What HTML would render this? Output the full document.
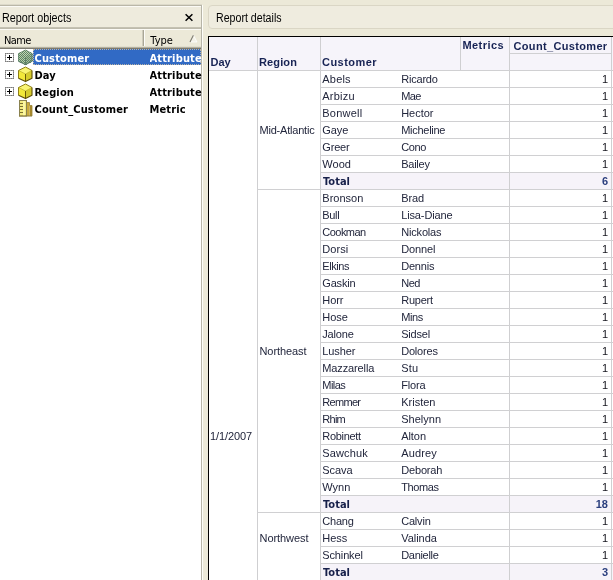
<!DOCTYPE html>
<html><head><meta charset="utf-8"><title>Report</title>
<style>
html,body{margin:0;padding:0;}
body{will-change:transform;width:613px;height:580px;overflow:hidden;background:#ece9d8;position:relative;font-family:"DejaVu Sans","Liberation Sans",sans-serif;font-size:11px;color:#000;}
.abs{position:absolute;}
.ui{font-family:"DejaVu Sans Condensed","DejaVu Sans","Liberation Sans",sans-serif;font-size:11px;letter-spacing:-0.2px;color:#000;white-space:nowrap;}
.ttl{font-family:"Liberation Sans",sans-serif;font-size:12.5px;line-height:15px;color:#000;white-space:nowrap;transform-origin:0 0;}
.tree{font-family:"DejaVu Sans Condensed","DejaVu Sans","Liberation Sans",sans-serif;font-weight:bold;font-size:11px;white-space:nowrap;letter-spacing:0.15px;}
.grid{position:absolute;left:208px;top:36px;width:405px;height:544px;background:#fff;border-left:1px solid #000;border-top:1px solid #000;box-sizing:border-box;overflow:hidden;}
.c{position:absolute;box-sizing:border-box;font-family:"Liberation Sans",sans-serif;font-size:11px;color:#2b2f4a;white-space:nowrap;}
.h{background:#f6f4fa;font-weight:bold;color:#1c2858;font-size:11px;}
.bl{border-left:1px solid #cfcfd1;}
.bb{border-bottom:1px solid #d0d0d2;}
.t{position:absolute;white-space:nowrap;line-height:13px;font-family:"Liberation Sans",sans-serif;font-size:11px;}
.d{color:#22263c;}
.n{color:#14141c;}
.tn{font-weight:bold;color:#2b3f7e;}
.hb{font-weight:bold;color:#172354;}
.tb{font-family:"DejaVu Sans Condensed","DejaVu Sans","Liberation Sans",sans-serif;font-weight:bold;color:#17204a;}
.tot{background:#f6f3f9;font-weight:bold;color:#1c2858;}
</style></head><body>


<div class="abs" style="left:0;top:4px;width:202px;height:1px;background:#dcd9ca;"></div>
<div class="abs" style="left:0;top:5px;width:202px;height:1px;background:#bab7a8;"></div>
<div class="abs" style="left:0;top:6px;width:201px;height:1px;background:#fbfaf5;"></div>
<div class="abs" style="left:0;top:7px;width:201px;height:20px;background:#eeebdd;"></div>
<div class="abs ttl" style="left:2px;top:11px;transform:scaleX(0.86);">Report objects</div>
<svg class="abs" style="left:184px;top:13px" width="10" height="9" viewBox="0 0 10 9"><path d="M1.6 1.2 L8.4 7.8 M8.4 1.2 L1.6 7.8" stroke="#000" stroke-width="1.5" fill="none"/></svg>
<div class="abs" style="left:0;top:27px;width:202px;height:1px;background:#c4c1b2;"></div>
<div class="abs" style="left:0;top:28px;width:202px;height:1px;background:#bdbaab;"></div>
<div class="abs" style="left:0;top:29px;width:201px;height:1px;background:#fbfaf5;"></div>
<div class="abs" style="left:0;top:30px;width:201px;height:16px;background:#ece9d8;"></div>
<div class="abs ui" style="left:4px;top:34px;line-height:14px;letter-spacing:-0.6px;">Name</div>
<div class="abs" style="left:142px;top:30px;width:1px;height:17px;background:#cfccbd;"></div>
<div class="abs" style="left:143px;top:30px;width:1px;height:17px;background:#a9a696;"></div>
<div class="abs" style="left:144px;top:30px;width:1px;height:17px;background:#fdfdf9;"></div>
<div class="abs ui" style="left:150.3px;top:34px;line-height:14px;letter-spacing:0px;">Type</div>
<svg class="abs" style="left:189px;top:34px" width="9" height="9" viewBox="0 0 9 9"><path d="M4.3 1 L8 8 L1.5 8 Z" fill="#f4f2e8" stroke="#fff" stroke-width="0.8"/><path d="M1 8 L4.4 1.2" stroke="#7d7a6d" stroke-width="1.1" fill="none"/></svg>
<div class="abs" style="left:0;top:46px;width:202px;height:1px;background:#e2dfce;"></div>
<div class="abs" style="left:0;top:47px;width:202px;height:1px;background:#b3b0a0;"></div>
<div class="abs" style="left:0;top:48px;width:202px;height:1px;background:#7d7b70;"></div>
<div class="abs" style="left:0;top:49px;width:201px;height:531px;background:#fff;"></div>
<div class="abs" style="left:201px;top:5px;width:1px;height:575px;background:#b7b5a8;"></div>
<div class="abs" style="left:202px;top:5px;width:1px;height:575px;background:#fdfdf8;"></div>
<div class="abs" style="left:33px;top:49px;width:168px;height:16px;background:#316ac5;outline:1px dotted #b9b3a6;outline-offset:-1px;"></div>

<svg class="abs" style="left:5px;top:53px" width="9" height="9" viewBox="0 0 9 9"><rect x="0.5" y="0.5" width="8" height="8" fill="#fff" stroke="#a2a2a2"/><path d="M0 0.5H1M8 0.5H9M0 8.5H1M8 8.5H9M2 0.5H3M4 0.5H5M6 0.5H7M2 8.5H3M4 8.5H5M6 8.5H7M0.5 2V3M0.5 4V5M0.5 6V7M8.5 2V3M8.5 4V5M8.5 6V7" stroke="#7c7c7c" stroke-width="1"/><path d="M2 4.5H7M4.5 2V7" stroke="#000" stroke-width="1"/></svg>
<svg class="abs" style="left:17px;top:49px" width="16" height="17" viewBox="0 0 16 17"><defs><pattern id="dz" width="2" height="2" patternUnits="userSpaceOnUse"><rect x="0" y="0" width="1" height="1" fill="#5d8069"/><rect x="1" y="1" width="1" height="1" fill="#5d8069"/></pattern></defs><path d="M1.5 4.5 L8.5 1 L15 4.5 L8.5 8 Z" fill="#c3dab0"/><path d="M1.5 4.5 L8.5 8 L8.5 15.6 L1.5 12.3 Z" fill="#b7d2a6"/><path d="M8.5 8 L15 4.5 L15 12.3 L8.5 15.6 Z" fill="#a3c196"/><path d="M1.5 4.5 L8.5 8 L15 4.5" stroke="#9fbd93" stroke-width="0.8" fill="none"/><path d="M8.5 8 V15.3" stroke="#5f7f68" stroke-width="1" fill="none"/><path d="M1.5 12.3 L1.5 4.5 L8.5 1 L15 4.5" stroke="#7f9f80" stroke-width="1" fill="none" stroke-linejoin="round"/><path d="M15 4.5 L15 12.3 L8.5 15.6 L1.5 12.3" stroke="#587a62" stroke-width="1.1" fill="none" stroke-linejoin="round"/><path d="M1 4.3 L8.5 0.6 L15.5 4.3 L15.5 12.5 L8.5 16 L1 12.5 Z" fill="url(#dz)" shape-rendering="crispEdges"/></svg>
<div class="abs tree" style="left:34.5px;top:52px;line-height:13px;color:#fff;">Customer</div>
<div class="abs tree" style="left:149.5px;top:52px;line-height:13px;color:#fff;width:52px;overflow:hidden;">Attribute</div>
<svg class="abs" style="left:5px;top:70px" width="9" height="9" viewBox="0 0 9 9"><rect x="0.5" y="0.5" width="8" height="8" fill="#fff" stroke="#a2a2a2"/><path d="M0 0.5H1M8 0.5H9M0 8.5H1M8 8.5H9M2 0.5H3M4 0.5H5M6 0.5H7M2 8.5H3M4 8.5H5M6 8.5H7M0.5 2V3M0.5 4V5M0.5 6V7M8.5 2V3M8.5 4V5M8.5 6V7" stroke="#7c7c7c" stroke-width="1"/><path d="M2 4.5H7M4.5 2V7" stroke="#000" stroke-width="1"/></svg>
<svg class="abs" style="left:17px;top:66px" width="16" height="17" viewBox="0 0 16 17"><path d="M1.5 4.5 L8.5 1 L15 4.5 L8.5 8 Z" fill="#f9f472"/><path d="M1.5 4.5 L8.5 8 L8.5 15.6 L1.5 12.3 Z" fill="#f2e83a"/><path d="M8.5 8 L15 4.5 L15 12.3 L8.5 15.6 Z" fill="#d6cc2c"/><path d="M1.5 4.5 L8.5 8 L15 4.5" stroke="#c2b626" stroke-width="0.8" fill="none"/><path d="M8.5 8 V15.3" stroke="#6a5a08" stroke-width="1" fill="none"/><path d="M1.5 12.3 L1.5 4.5 L8.5 1 L15 4.5" stroke="#8f8018" stroke-width="1" fill="none" stroke-linejoin="round"/><path d="M15 4.5 L15 12.3 L8.5 15.6 L1.5 12.3" stroke="#5e4f06" stroke-width="1.1" fill="none" stroke-linejoin="round"/></svg>
<div class="abs tree" style="left:34.5px;top:69px;line-height:13px;color:#000;">Day</div>
<div class="abs tree" style="left:149.5px;top:69px;line-height:13px;color:#000;width:52px;overflow:hidden;">Attribute</div>
<svg class="abs" style="left:5px;top:87px" width="9" height="9" viewBox="0 0 9 9"><rect x="0.5" y="0.5" width="8" height="8" fill="#fff" stroke="#a2a2a2"/><path d="M0 0.5H1M8 0.5H9M0 8.5H1M8 8.5H9M2 0.5H3M4 0.5H5M6 0.5H7M2 8.5H3M4 8.5H5M6 8.5H7M0.5 2V3M0.5 4V5M0.5 6V7M8.5 2V3M8.5 4V5M8.5 6V7" stroke="#7c7c7c" stroke-width="1"/><path d="M2 4.5H7M4.5 2V7" stroke="#000" stroke-width="1"/></svg>
<svg class="abs" style="left:17px;top:83px" width="16" height="17" viewBox="0 0 16 17"><path d="M1.5 4.5 L8.5 1 L15 4.5 L8.5 8 Z" fill="#f9f472"/><path d="M1.5 4.5 L8.5 8 L8.5 15.6 L1.5 12.3 Z" fill="#f2e83a"/><path d="M8.5 8 L15 4.5 L15 12.3 L8.5 15.6 Z" fill="#d6cc2c"/><path d="M1.5 4.5 L8.5 8 L15 4.5" stroke="#c2b626" stroke-width="0.8" fill="none"/><path d="M8.5 8 V15.3" stroke="#6a5a08" stroke-width="1" fill="none"/><path d="M1.5 12.3 L1.5 4.5 L8.5 1 L15 4.5" stroke="#8f8018" stroke-width="1" fill="none" stroke-linejoin="round"/><path d="M15 4.5 L15 12.3 L8.5 15.6 L1.5 12.3" stroke="#5e4f06" stroke-width="1.1" fill="none" stroke-linejoin="round"/></svg>
<div class="abs tree" style="left:34.5px;top:86px;line-height:13px;color:#000;">Region</div>
<div class="abs tree" style="left:149.5px;top:86px;line-height:13px;color:#000;width:52px;overflow:hidden;">Attribute</div>
<svg class="abs" style="left:19px;top:100px" width="14" height="17" viewBox="0 0 14 17"><rect x="10.5" y="5.5" width="2.5" height="10.5" fill="#a88a2c"/><rect x="8" y="2.5" width="2.5" height="13.5" fill="#c9aa3c"/><path d="M8 2.5 H10.5 V5.5 H13 V16" stroke="#9a8434" stroke-width="0.8" fill="none"/><rect x="0.5" y="0.5" width="7" height="15.5" fill="#f4ec7e" stroke="#8a8250" stroke-width="1"/><rect x="4" y="1" width="2" height="14.5" fill="#faf6a8"/><path d="M1 3.5H4M1 6.5H4M1 9.5H4M1 12.5H4" stroke="#7a7030" stroke-width="1"/><path d="M0 16 H13" stroke="#8a7a38" stroke-width="1"/></svg>
<div class="abs tree" style="left:34.5px;top:103px;line-height:13px;color:#000;">Count_Customer</div>
<div class="abs tree" style="left:149.5px;top:103px;line-height:13px;color:#000;width:52px;overflow:hidden;">Metric</div>

<div class="abs" style="left:203px;top:0;width:5px;height:580px;background:#ece9d8;"></div>
<div class="abs" style="left:208px;top:5px;width:410px;height:24px;border:1px solid #dad6c5;border-radius:4px;box-sizing:border-box;background:#efecdf;"></div>
<div class="abs ttl" style="left:216px;top:11px;transform:scaleX(0.85);">Report details</div>
<div class="grid">

<div class="c h bb" style="left:0px;top:0px;width:48px;height:34px;"></div>
<div class="c h bb bl" style="left:48px;top:0px;width:63px;height:34px;"></div>
<div class="c h bb bl" style="left:111px;top:0px;width:140px;height:34px;"></div>
<div class="c h bb bl" style="left:251px;top:0px;width:49px;height:34px;"></div>
<div class="c h bb bl" style="left:300px;top:0px;width:102px;height:17px;"></div>
<div class="c h bb bl" style="left:300px;top:17px;width:102px;height:17px;"></div>
<div class="c h bb bl" style="left:402px;top:0px;width:2px;height:34px;"></div>
<div class="c bb" style="left:0px;top:34px;width:48px;height:510px;"></div>
<div class="c bb bl" style="left:48px;top:34px;width:63px;height:119px;"></div>
<div class="c bb bl" style="left:111px;top:34px;width:189px;height:17px;"></div>
<div class="c bb bl" style="left:300px;top:34px;width:102px;height:17px;"></div>
<div class="c bb bl" style="left:402px;top:34px;width:2px;height:17px;"></div>
<div class="c bb bl" style="left:111px;top:51px;width:189px;height:17px;"></div>
<div class="c bb bl" style="left:300px;top:51px;width:102px;height:17px;"></div>
<div class="c bb bl" style="left:402px;top:51px;width:2px;height:17px;"></div>
<div class="c bb bl" style="left:111px;top:68px;width:189px;height:17px;"></div>
<div class="c bb bl" style="left:300px;top:68px;width:102px;height:17px;"></div>
<div class="c bb bl" style="left:402px;top:68px;width:2px;height:17px;"></div>
<div class="c bb bl" style="left:111px;top:85px;width:189px;height:17px;"></div>
<div class="c bb bl" style="left:300px;top:85px;width:102px;height:17px;"></div>
<div class="c bb bl" style="left:402px;top:85px;width:2px;height:17px;"></div>
<div class="c bb bl" style="left:111px;top:102px;width:189px;height:17px;"></div>
<div class="c bb bl" style="left:300px;top:102px;width:102px;height:17px;"></div>
<div class="c bb bl" style="left:402px;top:102px;width:2px;height:17px;"></div>
<div class="c bb bl" style="left:111px;top:119px;width:189px;height:17px;"></div>
<div class="c bb bl" style="left:300px;top:119px;width:102px;height:17px;"></div>
<div class="c bb bl" style="left:402px;top:119px;width:2px;height:17px;"></div>
<div class="c bb bl tot" style="left:111px;top:136px;width:189px;height:17px;"></div>
<div class="c bb bl tot" style="left:300px;top:136px;width:102px;height:17px;"></div>
<div class="c bb bl tot" style="left:402px;top:136px;width:2px;height:17px;"></div>
<div class="c bb bl" style="left:48px;top:153px;width:63px;height:323px;"></div>
<div class="c bb bl" style="left:111px;top:153px;width:189px;height:17px;"></div>
<div class="c bb bl" style="left:300px;top:153px;width:102px;height:17px;"></div>
<div class="c bb bl" style="left:402px;top:153px;width:2px;height:17px;"></div>
<div class="c bb bl" style="left:111px;top:170px;width:189px;height:17px;"></div>
<div class="c bb bl" style="left:300px;top:170px;width:102px;height:17px;"></div>
<div class="c bb bl" style="left:402px;top:170px;width:2px;height:17px;"></div>
<div class="c bb bl" style="left:111px;top:187px;width:189px;height:17px;"></div>
<div class="c bb bl" style="left:300px;top:187px;width:102px;height:17px;"></div>
<div class="c bb bl" style="left:402px;top:187px;width:2px;height:17px;"></div>
<div class="c bb bl" style="left:111px;top:204px;width:189px;height:17px;"></div>
<div class="c bb bl" style="left:300px;top:204px;width:102px;height:17px;"></div>
<div class="c bb bl" style="left:402px;top:204px;width:2px;height:17px;"></div>
<div class="c bb bl" style="left:111px;top:221px;width:189px;height:17px;"></div>
<div class="c bb bl" style="left:300px;top:221px;width:102px;height:17px;"></div>
<div class="c bb bl" style="left:402px;top:221px;width:2px;height:17px;"></div>
<div class="c bb bl" style="left:111px;top:238px;width:189px;height:17px;"></div>
<div class="c bb bl" style="left:300px;top:238px;width:102px;height:17px;"></div>
<div class="c bb bl" style="left:402px;top:238px;width:2px;height:17px;"></div>
<div class="c bb bl" style="left:111px;top:255px;width:189px;height:17px;"></div>
<div class="c bb bl" style="left:300px;top:255px;width:102px;height:17px;"></div>
<div class="c bb bl" style="left:402px;top:255px;width:2px;height:17px;"></div>
<div class="c bb bl" style="left:111px;top:272px;width:189px;height:17px;"></div>
<div class="c bb bl" style="left:300px;top:272px;width:102px;height:17px;"></div>
<div class="c bb bl" style="left:402px;top:272px;width:2px;height:17px;"></div>
<div class="c bb bl" style="left:111px;top:289px;width:189px;height:17px;"></div>
<div class="c bb bl" style="left:300px;top:289px;width:102px;height:17px;"></div>
<div class="c bb bl" style="left:402px;top:289px;width:2px;height:17px;"></div>
<div class="c bb bl" style="left:111px;top:306px;width:189px;height:17px;"></div>
<div class="c bb bl" style="left:300px;top:306px;width:102px;height:17px;"></div>
<div class="c bb bl" style="left:402px;top:306px;width:2px;height:17px;"></div>
<div class="c bb bl" style="left:111px;top:323px;width:189px;height:17px;"></div>
<div class="c bb bl" style="left:300px;top:323px;width:102px;height:17px;"></div>
<div class="c bb bl" style="left:402px;top:323px;width:2px;height:17px;"></div>
<div class="c bb bl" style="left:111px;top:340px;width:189px;height:17px;"></div>
<div class="c bb bl" style="left:300px;top:340px;width:102px;height:17px;"></div>
<div class="c bb bl" style="left:402px;top:340px;width:2px;height:17px;"></div>
<div class="c bb bl" style="left:111px;top:357px;width:189px;height:17px;"></div>
<div class="c bb bl" style="left:300px;top:357px;width:102px;height:17px;"></div>
<div class="c bb bl" style="left:402px;top:357px;width:2px;height:17px;"></div>
<div class="c bb bl" style="left:111px;top:374px;width:189px;height:17px;"></div>
<div class="c bb bl" style="left:300px;top:374px;width:102px;height:17px;"></div>
<div class="c bb bl" style="left:402px;top:374px;width:2px;height:17px;"></div>
<div class="c bb bl" style="left:111px;top:391px;width:189px;height:17px;"></div>
<div class="c bb bl" style="left:300px;top:391px;width:102px;height:17px;"></div>
<div class="c bb bl" style="left:402px;top:391px;width:2px;height:17px;"></div>
<div class="c bb bl" style="left:111px;top:408px;width:189px;height:17px;"></div>
<div class="c bb bl" style="left:300px;top:408px;width:102px;height:17px;"></div>
<div class="c bb bl" style="left:402px;top:408px;width:2px;height:17px;"></div>
<div class="c bb bl" style="left:111px;top:425px;width:189px;height:17px;"></div>
<div class="c bb bl" style="left:300px;top:425px;width:102px;height:17px;"></div>
<div class="c bb bl" style="left:402px;top:425px;width:2px;height:17px;"></div>
<div class="c bb bl" style="left:111px;top:442px;width:189px;height:17px;"></div>
<div class="c bb bl" style="left:300px;top:442px;width:102px;height:17px;"></div>
<div class="c bb bl" style="left:402px;top:442px;width:2px;height:17px;"></div>
<div class="c bb bl tot" style="left:111px;top:459px;width:189px;height:17px;"></div>
<div class="c bb bl tot" style="left:300px;top:459px;width:102px;height:17px;"></div>
<div class="c bb bl tot" style="left:402px;top:459px;width:2px;height:17px;"></div>
<div class="c bb bl" style="left:48px;top:476px;width:63px;height:68px;"></div>
<div class="c bb bl" style="left:111px;top:476px;width:189px;height:17px;"></div>
<div class="c bb bl" style="left:300px;top:476px;width:102px;height:17px;"></div>
<div class="c bb bl" style="left:402px;top:476px;width:2px;height:17px;"></div>
<div class="c bb bl" style="left:111px;top:493px;width:189px;height:17px;"></div>
<div class="c bb bl" style="left:300px;top:493px;width:102px;height:17px;"></div>
<div class="c bb bl" style="left:402px;top:493px;width:2px;height:17px;"></div>
<div class="c bb bl" style="left:111px;top:510px;width:189px;height:17px;"></div>
<div class="c bb bl" style="left:300px;top:510px;width:102px;height:17px;"></div>
<div class="c bb bl" style="left:402px;top:510px;width:2px;height:17px;"></div>
<div class="c bb bl tot" style="left:111px;top:527px;width:189px;height:17px;"></div>
<div class="c bb bl tot" style="left:300px;top:527px;width:102px;height:17px;"></div>
<div class="c bb bl tot" style="left:402px;top:527px;width:2px;height:17px;"></div>
<span class="t hb" style="top:19px;left:1.5px;letter-spacing:-0.06px;">Day</span>
<span class="t hb" style="top:19px;left:50px;letter-spacing:0.12px;">Region</span>
<span class="t hb" style="top:19px;left:113px;letter-spacing:0.46px;">Customer</span>
<span class="t hb" style="top:2px;left:253.5px;letter-spacing:0.42px;">Metrics</span>
<span class="t hb" style="top:3px;left:304.5px;letter-spacing:0.34px;">Count_Customer</span>
<span class="t d" style="top:393px;left:1px;letter-spacing:-0.1px;">1/1/2007</span>
<span class="t d" style="top:87px;left:50.5px;letter-spacing:-0.21px;">Mid-Atlantic</span>
<span class="t d" style="top:36px;left:113.30000000000001px;letter-spacing:0.2px;">Abels</span>
<span class="t d" style="top:36px;left:192.2px;letter-spacing:-0.2px;">Ricardo</span>
<span class="t n" style="top:36px;right:5px;">1</span>
<span class="t d" style="top:53px;left:113.30000000000001px;letter-spacing:0.21px;">Arbizu</span>
<span class="t d" style="top:53px;left:192.2px;letter-spacing:-0.6px;">Mae</span>
<span class="t n" style="top:53px;right:5px;">1</span>
<span class="t d" style="top:70px;left:113.30000000000001px;letter-spacing:0.22px;">Bonwell</span>
<span class="t d" style="top:70px;left:192.2px;letter-spacing:-0.04px;">Hector</span>
<span class="t n" style="top:70px;right:5px;">1</span>
<span class="t d" style="top:87px;left:113.30000000000001px;letter-spacing:-0.07px;">Gaye</span>
<span class="t d" style="top:87px;left:192.2px;letter-spacing:-0.28px;">Micheline</span>
<span class="t n" style="top:87px;right:5px;">1</span>
<span class="t d" style="top:104px;left:113.30000000000001px;letter-spacing:-0.17px;">Greer</span>
<span class="t d" style="top:104px;left:192.2px;letter-spacing:-0.4px;">Cono</span>
<span class="t n" style="top:104px;right:5px;">1</span>
<span class="t d" style="top:121px;left:113.30000000000001px;letter-spacing:0.02px;">Wood</span>
<span class="t d" style="top:121px;left:192.2px;letter-spacing:-0.24px;">Bailey</span>
<span class="t n" style="top:121px;right:5px;">1</span>
<span class="t tb" style="top:138px;left:114px;letter-spacing:0.02px;">Total</span>
<span class="t tn" style="top:138px;right:5px;">6</span>
<span class="t d" style="top:308px;left:50.5px;letter-spacing:-0.08px;">Northeast</span>
<span class="t d" style="top:155px;left:113.30000000000001px;letter-spacing:0.01px;">Bronson</span>
<span class="t d" style="top:155px;left:192.2px;letter-spacing:-0.07px;">Brad</span>
<span class="t n" style="top:155px;right:5px;">1</span>
<span class="t d" style="top:172px;left:113.30000000000001px;letter-spacing:-0.32px;">Bull</span>
<span class="t d" style="top:172px;left:192.2px;letter-spacing:-0.13px;">Lisa-Diane</span>
<span class="t n" style="top:172px;right:5px;">1</span>
<span class="t d" style="top:189px;left:113.30000000000001px;letter-spacing:-0.53px;">Cookman</span>
<span class="t d" style="top:189px;left:192.2px;letter-spacing:-0.17px;">Nickolas</span>
<span class="t n" style="top:189px;right:5px;">1</span>
<span class="t d" style="top:206px;left:113.30000000000001px;letter-spacing:0.08px;">Dorsi</span>
<span class="t d" style="top:206px;left:192.2px;letter-spacing:-0.14px;">Donnel</span>
<span class="t n" style="top:206px;right:5px;">1</span>
<span class="t d" style="top:223px;left:113.30000000000001px;letter-spacing:-0.44px;">Elkins</span>
<span class="t d" style="top:223px;left:192.2px;letter-spacing:-0.19px;">Dennis</span>
<span class="t n" style="top:223px;right:5px;">1</span>
<span class="t d" style="top:240px;left:113.30000000000001px;letter-spacing:-0.19px;">Gaskin</span>
<span class="t d" style="top:240px;left:192.2px;letter-spacing:-0.48px;">Ned</span>
<span class="t n" style="top:240px;right:5px;">1</span>
<span class="t d" style="top:257px;left:113.30000000000001px;letter-spacing:-0.07px;">Horr</span>
<span class="t d" style="top:257px;left:192.2px;letter-spacing:-0.24px;">Rupert</span>
<span class="t n" style="top:257px;right:5px;">1</span>
<span class="t d" style="top:274px;left:113.30000000000001px;letter-spacing:-0.07px;">Hose</span>
<span class="t d" style="top:274px;left:192.2px;letter-spacing:-0.4px;">Mins</span>
<span class="t n" style="top:274px;right:5px;">1</span>
<span class="t d" style="top:291px;left:113.30000000000001px;letter-spacing:-0.19px;">Jalone</span>
<span class="t d" style="top:291px;left:192.2px;letter-spacing:-0.19px;">Sidsel</span>
<span class="t n" style="top:291px;right:5px;">1</span>
<span class="t d" style="top:308px;left:113.30000000000001px;letter-spacing:-0.09px;">Lusher</span>
<span class="t d" style="top:308px;left:192.2px;letter-spacing:-0.2px;">Dolores</span>
<span class="t n" style="top:308px;right:5px;">1</span>
<span class="t d" style="top:325px;left:113.30000000000001px;letter-spacing:-0.13px;">Mazzarella</span>
<span class="t d" style="top:325px;left:192.2px;letter-spacing:0.15px;">Stu</span>
<span class="t n" style="top:325px;right:5px;">1</span>
<span class="t d" style="top:342px;left:113.30000000000001px;letter-spacing:-0.55px;">Milas</span>
<span class="t d" style="top:342px;left:192.2px;letter-spacing:-0.18px;">Flora</span>
<span class="t n" style="top:342px;right:5px;">1</span>
<span class="t d" style="top:359px;left:113.30000000000001px;letter-spacing:-0.69px;">Remmer</span>
<span class="t d" style="top:359px;left:192.2px;letter-spacing:0.01px;">Kristen</span>
<span class="t n" style="top:359px;right:5px;">1</span>
<span class="t d" style="top:376px;left:113.30000000000001px;letter-spacing:-0.73px;">Rhim</span>
<span class="t d" style="top:376px;left:192.2px;letter-spacing:0.01px;">Shelynn</span>
<span class="t n" style="top:376px;right:5px;">1</span>
<span class="t d" style="top:393px;left:113.30000000000001px;letter-spacing:-0.31px;">Robinett</span>
<span class="t d" style="top:393px;left:192.2px;letter-spacing:-0.05px;">Alton</span>
<span class="t n" style="top:393px;right:5px;">1</span>
<span class="t d" style="top:410px;left:113.30000000000001px;letter-spacing:0.13px;">Sawchuk</span>
<span class="t d" style="top:410px;left:192.2px;letter-spacing:0.16px;">Audrey</span>
<span class="t n" style="top:410px;right:5px;">1</span>
<span class="t d" style="top:427px;left:113.30000000000001px;letter-spacing:-0.05px;">Scava</span>
<span class="t d" style="top:427px;left:192.2px;letter-spacing:-0.16px;">Deborah</span>
<span class="t n" style="top:427px;right:5px;">1</span>
<span class="t d" style="top:444px;left:113.30000000000001px;letter-spacing:0.02px;">Wynn</span>
<span class="t d" style="top:444px;left:192.2px;letter-spacing:-0.39px;">Thomas</span>
<span class="t n" style="top:444px;right:5px;">1</span>
<span class="t tb" style="top:461px;left:114px;letter-spacing:0.02px;">Total</span>
<span class="t tn" style="top:461px;right:5px;">18</span>
<span class="t d" style="top:495px;left:50.5px;letter-spacing:-0.06px;">Northwest</span>
<span class="t d" style="top:478px;left:113.30000000000001px;letter-spacing:-0.24px;">Chang</span>
<span class="t d" style="top:478px;left:192.2px;letter-spacing:-0.19px;">Calvin</span>
<span class="t n" style="top:478px;right:5px;">1</span>
<span class="t d" style="top:495px;left:113.30000000000001px;letter-spacing:-0.07px;">Hess</span>
<span class="t d" style="top:495px;left:192.2px;letter-spacing:-0.03px;">Valinda</span>
<span class="t n" style="top:495px;right:5px;">1</span>
<span class="t d" style="top:512px;left:113.30000000000001px;letter-spacing:-0.14px;">Schinkel</span>
<span class="t d" style="top:512px;left:192.2px;letter-spacing:-0.31px;">Danielle</span>
<span class="t n" style="top:512px;right:5px;">1</span>
<span class="t tb" style="top:529px;left:114px;letter-spacing:0.02px;">Total</span>
<span class="t tn" style="top:529px;right:5px;">3</span>
</div>
</body></html>
